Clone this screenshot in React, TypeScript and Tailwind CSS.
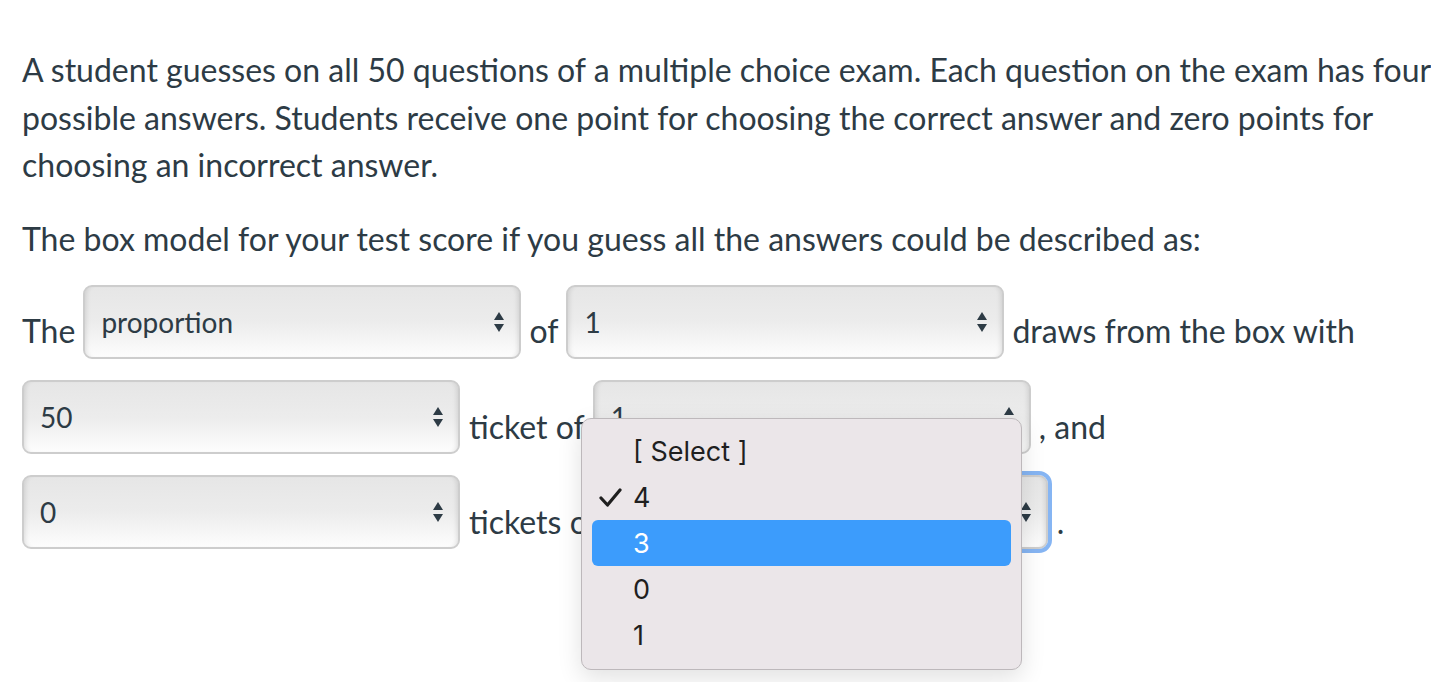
import React from "react";

const Arrows = () => (
  <svg width="12" height="22" viewBox="0 0 12 22" className="shrink-0">
    <path d="M6 1 L11 9 L1 9 Z" fill="#2d3b45" />
    <path d="M1 13 L11 13 L6 21 Z" fill="#2d3b45" />
  </svg>
);

function FakeSelect({ value, focused = false, className = "" }: { value: string; focused?: boolean; className?: string }) {
  return (
    <div
      className={`relative flex h-[74px] w-[438px] shrink-0 items-center justify-between rounded-[9px] border-2 border-[#cdcdcd] bg-gradient-to-b from-[#e6e6e6] via-[#ececec] to-[#fdfdfd] pl-[16px] pr-[14px] shadow-[inset_5px_0_5px_-4px_rgba(0,0,0,0.12),inset_-5px_0_5px_-4px_rgba(0,0,0,0.12)] ${
        focused ? "outline outline-[4px] outline-[#86b5f3]" : ""
      } ${className}`}
    >
      <span className="text-[28px] leading-none text-[#2d3b45]">{value}</span>
      <Arrows />
    </div>
  );
}

export default function App() {
  const font = { fontFamily: "Lato, 'Noto Sans', sans-serif" };
  return (
    <div className="relative min-h-[682px] w-[1431px] overflow-hidden bg-white text-[#2d3b45]" style={font}>
      <div className="pl-[22px] pt-[46px] text-[32px] leading-[47.5px]">
        <p className="whitespace-nowrap">
          A student guesses on all 50 questions of a multiple choice exam. Each question on the exam has four
          <br />
          possible answers. Students receive one point for choosing the correct answer and zero points for
          <br />
          choosing an incorrect answer.
        </p>
        <p className="mt-[26px] whitespace-nowrap">
          The box model for your test score if you guess all the answers could be described as:
        </p>

        <div className="mt-[23px] flex items-start gap-[8px]">
          <span className="mt-[22px] whitespace-nowrap">The</span>
          <FakeSelect value="proportion" />
          <span className="mt-[22px] whitespace-nowrap">of</span>
          <FakeSelect value="1" />
          <span className="mt-[22px] whitespace-nowrap">draws from the box with</span>
        </div>

        <div className="mt-[21px] flex items-start gap-[8px]">
          <FakeSelect value="50" />
          <span className="mt-[23px] ml-[1px] whitespace-nowrap">ticket of</span>
          <FakeSelect value="1" />
          <span className="mt-[23px] whitespace-nowrap">, and</span>
        </div>

        <div className="mt-[21px] flex items-start gap-[8px]">
          <FakeSelect value="0" />
          <span className="mt-[23px] ml-[1px] whitespace-nowrap">tickets of</span>
          <FakeSelect value="3" focused className="ml-[3px]" />
          <span className="mt-[23px] ml-[1px] whitespace-nowrap">.</span>
        </div>
      </div>

      <div
        className="absolute left-[581px] top-[418px] w-[441px] rounded-[10px] border border-[#bdb8bb] bg-[#ebe6e9] px-[10px] pb-[11px] pt-[9px] text-[27px] text-[#1f1f1f] shadow-[0_8px_24px_rgba(0,0,0,0.12)]"
        style={{ fontFamily: "Inter, 'Noto Sans', sans-serif" }}
      >
        {[
          { label: "[ Select ]", checked: false, active: false },
          { label: "4", checked: true, active: false },
          { label: "3", checked: false, active: true },
          { label: "0", checked: false, active: false },
          { label: "1", checked: false, active: false },
        ].map((it) => (
          <div
            key={it.label}
            className={`relative flex h-[46px] items-center rounded-[6px] pl-[41px] ${
              it.active ? "bg-[#3c9cfc] text-white" : ""
            }`}
          >
            {it.checked && (
              <svg width="24" height="20" viewBox="0 0 24 20" className="absolute left-[7px] top-[14px]">
                <path d="M2 10 L8.5 17 L21 2" fill="none" stroke="#1f1f1f" strokeWidth="3.2" strokeLinecap="round" strokeLinejoin="round" />
              </svg>
            )}
            <span className="leading-none">{it.label}</span>
          </div>
        ))}
      </div>
    </div>
  );
}
